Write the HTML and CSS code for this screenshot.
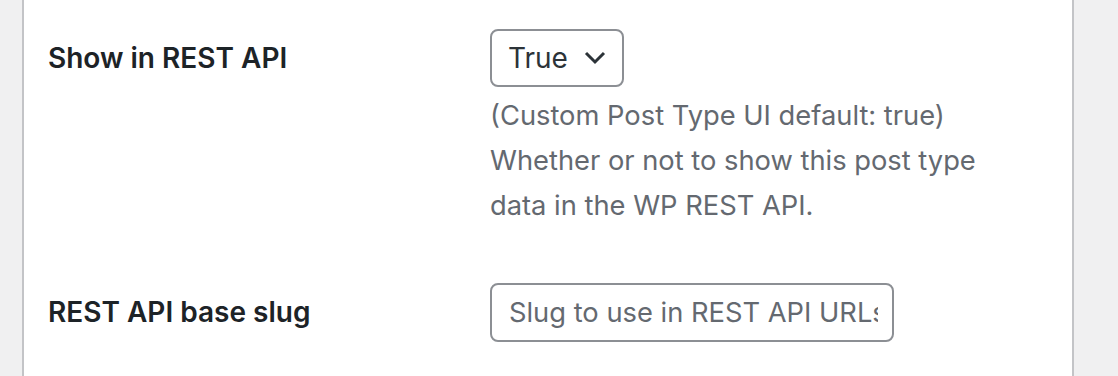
FILE: index.html
```html
<!DOCTYPE html>
<html>
<head>
<meta charset="utf-8">
<link rel="stylesheet" href="styles.css">
</head>
<body>
<div class="page">
  <div class="panel">
    <div class="row row-first">
      <div class="label">Show in REST API</div>
      <div class="field">
        <div class="select">
          <span class="select-value">True</span>
          <svg class="chevron" width="22" height="14" viewBox="0 0 22 14"><path d="M2 2 L11 11 L20 2" fill="none" stroke="#2c3338" stroke-width="3"/></svg>
        </div>
        <p class="desc">(Custom Post Type UI default: true)<br>Whether or not to show this post type<br>data in the WP REST API.</p>
      </div>
    </div>
    <div class="row row-second">
      <div class="label">REST API base slug</div>
      <div class="field">
        <input class="text-input" type="text" placeholder="Slug to use in REST API URLs">
      </div>
    </div>
  </div>
</div>
</body>
</html>
```
FILE: styles.css
```css
html, body {
  margin: 0;
  padding: 0;
  background: #f0f0f1;
  height: 376px;
  overflow: hidden;
}
.page {
  padding: 0 44px 0 22px;
  height: 376px;
  font-family: Inter, "Liberation Sans", sans-serif;
}
.panel {
  background: #fff;
  border-left: 2px solid #c3c4c7;
  border-right: 2px solid #c3c4c7;
  height: 376px;
  padding-left: 24px;
  box-sizing: border-box;
}
.row {
  display: grid;
  grid-template-columns: 442px 1fr;
  align-items: start;
}
.row-first { height: 254px; }
.label {
  padding-top: 40px;
  font-size: 28px;
  line-height: 36px;
  font-weight: 600;
  color: #1d2327;
}
.field { padding-top: 29px; }
.select {
  box-sizing: border-box;
  width: 134px;
  height: 58px;
  border: 2px solid #8c8f94;
  border-radius: 8px;
  display: flex;
  align-items: center;
  padding-left: 16px;
  padding-right: 16px;
  justify-content: space-between;
  font-size: 28px;
  color: #2c3338;
}
.chevron { display: block; }
.desc {
  margin: 6px 0 0;
  font-size: 27.3px;
  line-height: 45px;
  color: #646970;
}
.text-input {
  box-sizing: border-box;
  width: 404px;
  height: 59px;
  border: 2px solid #8c8f94;
  border-radius: 8px;
  padding: 0 14px 0 17px;
  font-family: Inter, "Liberation Sans", sans-serif;
  font-size: 27.3px;
  color: #2c3338;
  background: #fff;
  outline: none;
  display: block;
}
.text-input::placeholder { color: #646970; opacity: 1; }
```
